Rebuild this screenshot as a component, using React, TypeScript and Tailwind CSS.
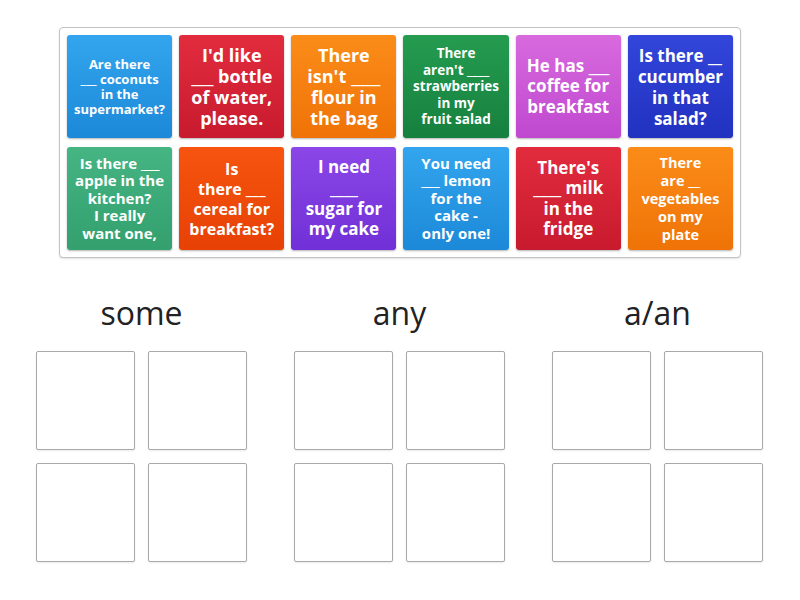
type Card = {
  lines: string[];
  size: string;
  color: string;
};

const cards: Card[] = [
  { lines: ["Are there", "___ coconuts", "in the", "supermarket?"], size: "text-[13px] leading-[15px]", color: "from-[#33a5ee] to-[#1b89d8]" },
  { lines: ["I'd like", "___ bottle", "of water,", "please."], size: "text-[18px] leading-[21px]", color: "from-[#e22c3e] to-[#c81a2e]" },
  { lines: ["There", "isn't ____", "flour in", "the bag"], size: "text-[18px] leading-[21px]", color: "from-[#fb8c18] to-[#ef7306]" },
  { lines: ["There", "aren't ____", "strawberries", "in my", "fruit salad"], size: "text-[13.5px] leading-[16.5px]", color: "from-[#259c50] to-[#16803e]" },
  { lines: ["He has ___", "coffee for", "breakfast"], size: "text-[17px] leading-[20.5px]", color: "from-[#d86ade] to-[#bf48cf]" },
  { lines: ["Is there __", "cucumber", "in that", "salad?"], size: "text-[17px] leading-[21px]", color: "from-[#3346db] to-[#2131c0]" },
  { lines: ["Is there ___", "apple in the", "kitchen?", "I really", "want one,"], size: "text-[15px] leading-[17.5px]", color: "from-[#45b583] to-[#33a06e]" },
  { lines: ["Is", "there ___", "cereal for", "breakfast?"], size: "text-[16px] leading-[20px]", color: "from-[#f6540f] to-[#e74105]" },
  { lines: ["I need", "____", "sugar for", "my cake"], size: "text-[17px] leading-[20.7px]", color: "from-[#8b46e7] to-[#7130d7]" },
  { lines: ["You need", "___ lemon", "for the", "cake -", "only one!"], size: "text-[15px] leading-[17.5px]", color: "from-[#33a5ee] to-[#1b89d8]" },
  { lines: ["There's", "____ milk", "in the", "fridge"], size: "text-[17px] leading-[20.5px]", color: "from-[#e22c3e] to-[#c81a2e]" },
  { lines: ["There", "are __", "vegetables", "on my", "plate"], size: "text-[14.5px] leading-[18px]", color: "from-[#fb8c18] to-[#ef7306]" },
];

const groups = ["some", "any", "a/an"];

function CardTile({ card }: { card: Card }) {
  return (
    <div
      className={`flex h-[103px] flex-col items-center justify-center rounded-[3px] bg-linear-to-b ${card.color} text-center font-bold text-white shadow-[0_1px_2px_rgba(0,0,0,0.3)] ${card.size}`}
    >
      {card.lines.map((line, i) => (
        <span key={i} className="whitespace-nowrap">
          {line}
        </span>
      ))}
    </div>
  );
}

export default function App() {
  return (
    <div className="h-[600px] w-[800px] bg-white font-['Open_Sans',sans-serif]">
      <div className="pt-[27px]">
        <div className="mx-auto w-[682px] rounded-[4px] border border-[#c4c4c4] bg-white p-[7px] shadow-[0_1px_2px_rgba(0,0,0,0.12)]">
          <div className="grid grid-cols-6 gap-x-[7px] gap-y-[9px]">
            {cards.map((c, i) => (
              <CardTile key={i} card={c} />
            ))}
          </div>
        </div>
      </div>

      <div className="mt-[36px] flex gap-[47px] pl-[36px]">
        {groups.map((g) => (
          <div key={g} className="flex w-[211px] flex-col items-center">
            <div className="h-[38px] text-[32px] leading-[38px] text-[#222]">{g}</div>
            <div className="mt-[19px] grid grid-cols-2 gap-[13px]">
              {[0, 1, 2, 3].map((b) => (
                <div
                  key={b}
                  className="h-[99px] w-[99px] rounded-[2px] border-[1.5px] border-[#a8a8a8] bg-white shadow-[0_1px_2px_rgba(0,0,0,0.08)]"
                />
              ))}
            </div>
          </div>
        ))}
      </div>
    </div>
  );
}
